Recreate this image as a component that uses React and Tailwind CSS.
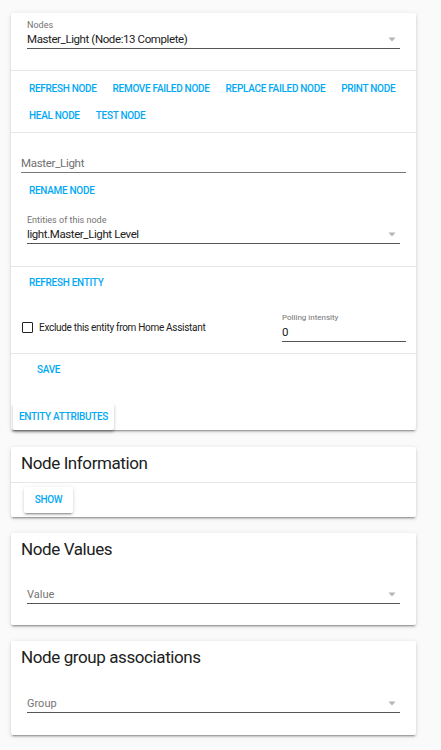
import React from 'react'

const cardShadow =
  'shadow-[0_2px_2px_0_rgba(0,0,0,0.14),0_1px_5px_0_rgba(0,0,0,0.12),0_3px_1px_-2px_rgba(0,0,0,0.2)]'

function Arrow() {
  return (
    <svg width="8" height="5" viewBox="0 0 8 5" className="shrink-0 mr-[4px]">
      <path d="M0.5 0.5 L7.5 0.5 L4 4.5 Z" fill="#b5b5b5" />
    </svg>
  )
}

function FlatButton({ children, className = '' }) {
  return (
    <button className={`h-[27px] px-2 text-[10px] font-medium tracking-[-0.3px] text-[#03a9f4] uppercase ${className}`}>
      {children}
    </button>
  )
}

function Dropdown({ label, value, placeholder }) {
  return (
    <div>
      {label && <div className="text-[9px] leading-[12px] text-[#737373]">{label}</div>}
      <div className="flex h-[18px] items-center justify-between border-b border-[#555]">
        {value ? (
          <span className="text-[11.5px] leading-[17px] tracking-[-0.4px] text-[#212121]">{value}</span>
        ) : (
          <span className="text-[11px] leading-[17px] text-[#757575]">{placeholder}</span>
        )}
        <Arrow />
      </div>
    </div>
  )
}

function Card({ children, className = '' }) {
  return <div className={`bg-white rounded-[2px] ${cardShadow} ${className}`}>{children}</div>
}

function CardTitle({ children }) {
  return (
    <div className="px-[10px] pt-[5px] text-[17px] leading-[22px] tracking-[-0.4px] text-[#212121]">
      {children}
    </div>
  )
}

export default function App() {
  return (
    <div className="min-h-screen bg-[#fafafa] pt-[13px] pb-4 font-['Roboto',sans-serif]">
      <div className="ml-[11px] w-[405px]">
        {/* node selector card */}
        <Card>
          <div className="h-[57px] px-4 pt-[6px]">
            <Dropdown label="Nodes" value="Master_Light (Node:13 Complete)" />
          </div>

          <div className="flex flex-wrap border-t border-[#e6e6e6] pl-[10px] pr-[2px] pt-[4px] pb-[3px]">
            <FlatButton>Refresh Node</FlatButton>
            <FlatButton>Remove Failed Node</FlatButton>
            <FlatButton>Replace Failed Node</FlatButton>
            <FlatButton>Print Node</FlatButton>
            <FlatButton>Heal Node</FlatButton>
            <FlatButton>Test Node</FlatButton>
          </div>

          <div className="border-t border-[#e6e6e6] px-[10px] pt-[22px] pb-[22px]">
            <div className="h-[18px] border-b border-[#777] text-[11.5px] leading-[17px] tracking-[-0.3px] text-[#6f6f6f]">
              Master_Light
            </div>
            <div className="mt-[4px]">
              <FlatButton>Rename Node</FlatButton>
            </div>
            <div className="mt-[10px] px-[6px]">
              <Dropdown label="Entities of this node" value="light.Master_Light Level" />
            </div>
          </div>

          <div className="border-t border-[#e6e6e6] pt-[2px] pb-[11px]">
            <div className="px-[10px]">
              <FlatButton>Refresh Entity</FlatButton>
            </div>
            <div className="mt-[16px] flex items-center justify-between pl-[11px] pr-[10px]">
              <label className="flex items-center gap-[6px]">
                <span className="h-[11px] w-[11px] rounded-[1px] border-[1.5px] border-[#222]" />
                <span className="text-[10px] tracking-[-0.3px] text-[#212121]">
                  Exclude this entity from Home Assistant
                </span>
              </label>
              <div className="w-[124px]">
                <div className="text-[8px] leading-[12px] text-[#737373]">Polling intensity</div>
                <div className="h-[18px] border-b border-[#555] text-[11.5px] leading-[17px] text-[#212121]">0</div>
              </div>
            </div>
          </div>

          <div className="border-t border-[#e6e6e6] pt-[2px]">
            <div className="pl-[18px]">
              <FlatButton>Save</FlatButton>
            </div>
            <button className="mt-[20px] ml-[2px] h-[27px] px-[6px] bg-white text-[10px] font-medium tracking-[-0.3px] text-[#03a9f4] uppercase rounded-[2px] shadow-[0_2px_3px_rgba(0,0,0,0.3)]">
              Entity Attributes
            </button>
          </div>
        </Card>

        {/* node information */}
        <Card className="mt-[17px] pb-[4px]">
          <div className="h-[35px]">
            <CardTitle>Node Information</CardTitle>
          </div>
          <div className="border-t border-[#e6e6e6] pt-[3px] pl-[13px]">
            <button
              className={`h-[26px] w-[49px] bg-white text-[10px] font-medium tracking-[-0.3px] text-[#03a9f4] uppercase rounded-[2px] ${cardShadow}`}
            >
              Show
            </button>
          </div>
        </Card>

        {/* node values */}
        <Card className="mt-[16px] pb-[21px]">
          <CardTitle>Node Values</CardTitle>
          <div className="mt-[26px] px-4">
            <Dropdown placeholder="Value" />
          </div>
        </Card>

        {/* group associations */}
        <Card className="mt-[16px] pb-[22px]">
          <CardTitle>Node group associations</CardTitle>
          <div className="mt-[27px] px-4">
            <Dropdown placeholder="Group" />
          </div>
        </Card>
      </div>
    </div>
  )
}
